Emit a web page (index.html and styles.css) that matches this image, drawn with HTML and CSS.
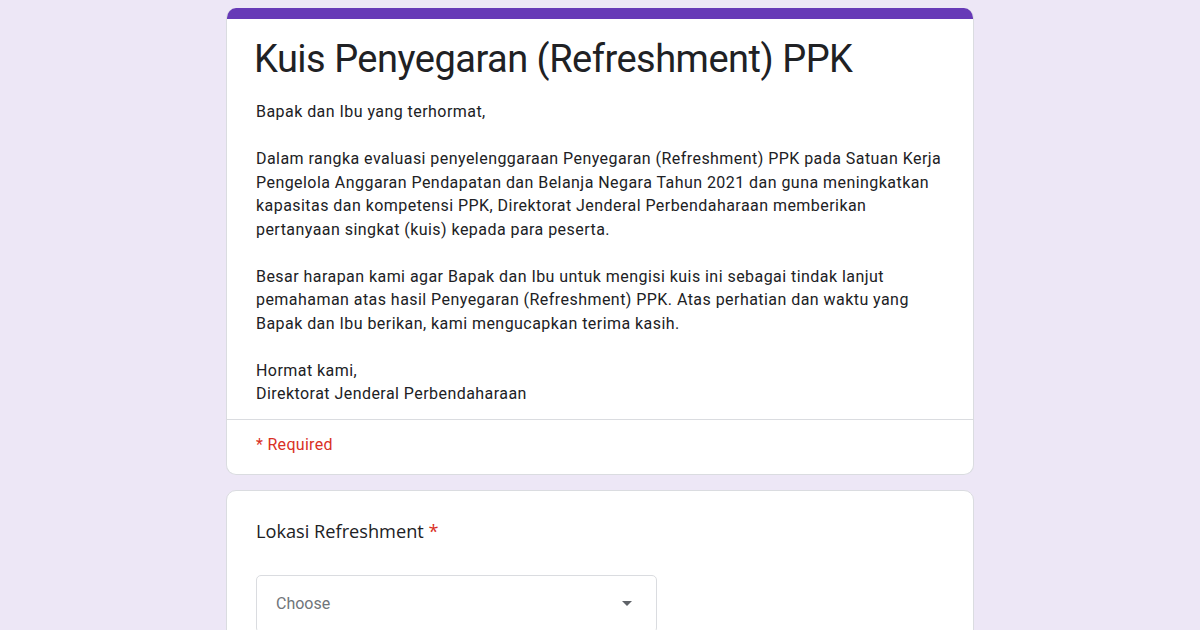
FILE: index.html
```html
<!DOCTYPE html>
<html lang="id">
<head>
<meta charset="utf-8">
<title>Kuis Penyegaran (Refreshment) PPK</title>
<link rel="stylesheet" href="styles.css">
</head>
<body>
<main class="form">
  <section class="card header-card">
    <div class="accent"></div>
    <div class="header-body">
      <h1 class="title">Kuis Penyegaran (Refreshment) PPK</h1>
      <div class="desc">Bapak dan Ibu yang terhormat,

Dalam rangka evaluasi penyelenggaraan Penyegaran (Refreshment) PPK pada Satuan Kerja
Pengelola Anggaran Pendapatan dan Belanja Negara Tahun 2021 dan guna meningkatkan
kapasitas dan kompetensi PPK, Direktorat Jenderal Perbendaharaan memberikan
pertanyaan singkat (kuis) kepada para peserta.

Besar harapan kami agar Bapak dan Ibu untuk mengisi kuis ini sebagai tindak lanjut
pemahaman atas hasil Penyegaran (Refreshment) PPK. Atas perhatian dan waktu yang
Bapak dan Ibu berikan, kami mengucapkan terima kasih.

Hormat kami,
Direktorat Jenderal Perbendaharaan</div>
    </div>
    <div class="required-note">* Required</div>
  </section>

  <section class="card question-card">
    <div class="question-title">Lokasi Refreshment <span class="star">*</span></div>
    <div class="select">
      <span class="placeholder">Choose</span>
      <svg class="caret" width="10" height="5" viewBox="0 0 10 5"><path d="M0 0h10L5 5z" fill="#5f6368"/></svg>
    </div>
  </section>
</main>
</body>
</html>
```
FILE: styles.css
```css
html, body {
  margin: 0;
  padding: 0;
  background: #ede7f6;
}
body {
  font-family: Roboto, "Liberation Sans", sans-serif;
  color: #202124;
}
.form {
  width: 748px;
  margin: 0 auto;
  padding-top: 8px;
  display: flex;
  flex-direction: column;
  gap: 15px;
}
.card {
  background: #fff;
  border: 1px solid #dadce0;
  border-radius: 10px;
  overflow: hidden;
}
.header-card {
  border-top: none;
}
.accent {
  height: 11px;
  background: #673ab7;
  margin: 0 -1px;
}
.header-body {
  padding: 14px 29px 13px;
  border-bottom: 1px solid #dadce0;
}
.title {
  margin: 0 0 0 -2px;
  font-family: Roboto, sans-serif;
  font-weight: 400;
  font-size: 38px;
  line-height: 52px;
  color: #202124;
  letter-spacing: -0.5px;
}
.desc {
  margin-top: 15px;
  white-space: pre-line;
  font-size: 16px;
  line-height: 23.5px;
  letter-spacing: 0.45px;
  color: #202124;
}
.required-note {
  padding: 13px 29px 17px;
  font-size: 16px;
  line-height: 24px;
  color: #d93025;
  letter-spacing: 0.3px;
}
.question-card {
  padding: 26px 29px 40px;
}
.question-title {
  font-family: "Open Sans", Roboto, sans-serif;
  font-size: 18.2px;
  line-height: 28px;
  color: #202124;
}
.star {
  color: #d93025;
}
.select {
  margin-top: 30px;
  width: 401px;
  height: 58px;
  box-sizing: border-box;
  border: 1px solid #dadce0;
  border-radius: 5px;
  display: flex;
  align-items: center;
  justify-content: space-between;
  padding: 0 24px 0 19px;
}
.placeholder {
  font-size: 16px;
  color: #70757a;
}
.caret {
  display: block;
}
```
